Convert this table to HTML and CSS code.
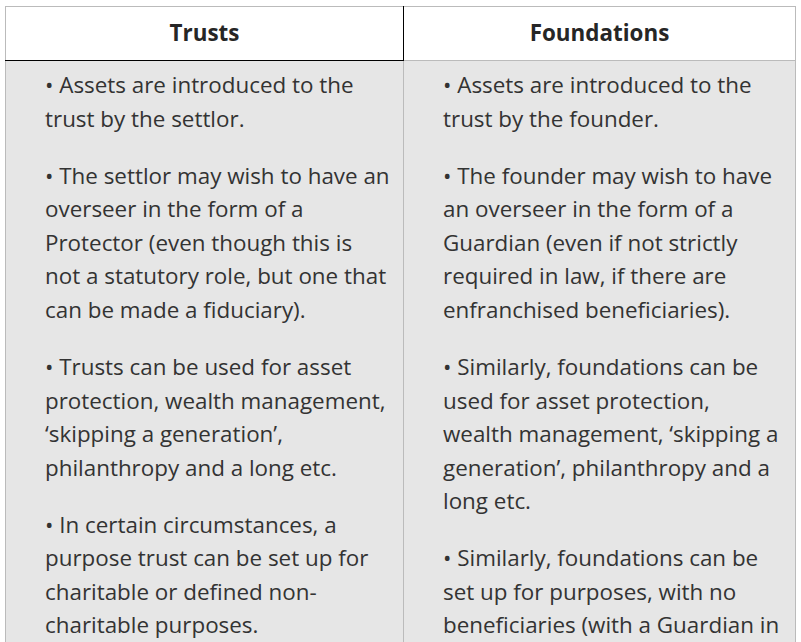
FILE: index.html
```html
<!DOCTYPE html>
<html>
<head>
<meta charset="utf-8">
<link rel="stylesheet" href="styles.css">
</head>
<body>
<div class="wrap">
<table class="compare">
  <thead>
    <tr>
      <th class="h-left">Trusts</th>
      <th class="h-right">Foundations</th>
    </tr>
  </thead>
  <tbody>
    <tr>
      <td class="c-left">
        <p>• Assets are introduced to the trust by the settlor.</p>
        <p>• The settlor may wish to have an overseer in the form of a Protector (even though this is not a statutory role, but one that can be made a fiduciary).</p>
        <p>• Trusts can be used for asset protection, wealth management, ‘skipping a generation’, philanthropy and a long etc.</p>
        <p>• In certain circumstances, a purpose trust can be set up for charitable or defined non-charitable purposes.</p>
      </td>
      <td class="c-right">
        <p>• Assets are introduced to the trust by the founder.</p>
        <p>• The founder may wish to have an overseer in the form of a Guardian (even if not strictly required in law, if there are enfranchised beneficiaries).</p>
        <p>• Similarly, foundations can be used for asset protection, wealth management, ‘skipping a generation’, philanthropy and a long etc.</p>
        <p>• Similarly, foundations can be set up for purposes, with no beneficiaries (with a Guardian in place).</p>
      </td>
    </tr>
  </tbody>
</table>
</div>
</body>
</html>
```

FILE: styles.css
```css
html, body {
  margin: 0;
  padding: 0;
  background: #fff;
}
.wrap {
  padding: 6px 5px 0 5px;
}
.compare {
  border-collapse: collapse;
  width: 791px;
  table-layout: fixed;
  font-family: "Open Sans", sans-serif;
  color: #333;
}
.compare th {
  height: 51px;
  padding: 0 0 2px 0;
  font-size: 22.4px;
  font-weight: 700;
  color: #262626;
  background: #fff;
  text-align: center;
  vertical-align: middle;
  border-top: 1px solid #bbb;
}
.h-left {
  width: 397px;
  border-left: 1px solid #bbb;
  border-right: 1px solid #000;
  border-bottom: 1px solid #000;
}
.h-right {
  border-right: 1px solid #bbb;
  border-bottom: 1px solid #bbb;
}
.compare td {
  background: #e6e6e6;
  vertical-align: top;
  padding: 7px 0 0 39px;
  font-size: 22.4px;
  line-height: 33.6px;
}
.c-left {
  border-left: 1px solid #bbb;
  border-right: 1px solid #bbb;
}
.c-right {
  border-right: 1px solid #bbb;
}
.c-left p {
  width: 346px;
}
.c-right p {
  width: 340px;
}
.compare p {
  margin: 0 0 23.4px 0;
}
```
